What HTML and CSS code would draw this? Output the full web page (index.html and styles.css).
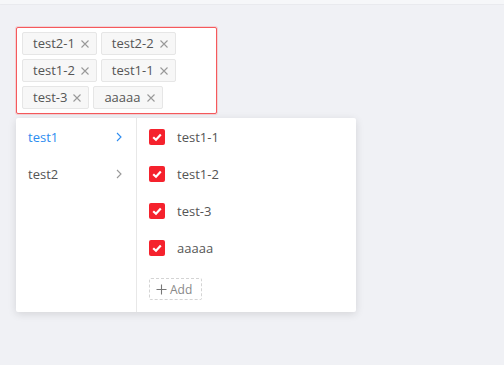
FILE: index.html
```html
<!DOCTYPE html>
<html>
<head>
<meta charset="utf-8">
<link rel="stylesheet" href="styles.css">
</head>
<body>
<div class="topbar"></div>
<div class="content">
  <div class="select">
    <span class="tag">test2-1<svg class="x" width="8" height="8" viewBox="0 0 8 8"><path d="M0.5 0.5 L7.5 7.5 M7.5 0.5 L0.5 7.5" stroke="currentColor" stroke-width="1.1"/></svg></span>
    <span class="tag">test2-2<svg class="x" width="8" height="8" viewBox="0 0 8 8"><path d="M0.5 0.5 L7.5 7.5 M7.5 0.5 L0.5 7.5" stroke="currentColor" stroke-width="1.1"/></svg></span>
    <span class="tag">test1-2<svg class="x" width="8" height="8" viewBox="0 0 8 8"><path d="M0.5 0.5 L7.5 7.5 M7.5 0.5 L0.5 7.5" stroke="currentColor" stroke-width="1.1"/></svg></span>
    <span class="tag">test1-1<svg class="x" width="8" height="8" viewBox="0 0 8 8"><path d="M0.5 0.5 L7.5 7.5 M7.5 0.5 L0.5 7.5" stroke="currentColor" stroke-width="1.1"/></svg></span>
    <span class="tag">test-3<svg class="x" width="8" height="8" viewBox="0 0 8 8"><path d="M0.5 0.5 L7.5 7.5 M7.5 0.5 L0.5 7.5" stroke="currentColor" stroke-width="1.1"/></svg></span>
    <span class="tag">aaaaa<svg class="x" width="8" height="8" viewBox="0 0 8 8"><path d="M0.5 0.5 L7.5 7.5 M7.5 0.5 L0.5 7.5" stroke="currentColor" stroke-width="1.1"/></svg></span>
  </div>
  <div class="dropdown">
    <div class="menu">
      <div class="item active">test1<svg class="chev" width="8" height="10" viewBox="0 0 8 10"><path d="M2 1 L6 5 L2 9" fill="none" stroke="currentColor" stroke-width="1.1"/></svg></div>
      <div class="item">test2<svg class="chev" width="8" height="10" viewBox="0 0 8 10"><path d="M2 1 L6 5 L2 9" fill="none" stroke="currentColor" stroke-width="1.1"/></svg></div>
    </div>
    <div class="options">
      <div class="opt"><span class="cb"><svg width="16" height="16" viewBox="0 0 16 16"><path d="M4.2 8.2 L7 10.8 L11.8 5.6" fill="none" stroke="#fff" stroke-width="2.2"/></svg></span>test1-1</div>
      <div class="opt"><span class="cb"><svg width="16" height="16" viewBox="0 0 16 16"><path d="M4.2 8.2 L7 10.8 L11.8 5.6" fill="none" stroke="#fff" stroke-width="2.2"/></svg></span>test1-2</div>
      <div class="opt"><span class="cb"><svg width="16" height="16" viewBox="0 0 16 16"><path d="M4.2 8.2 L7 10.8 L11.8 5.6" fill="none" stroke="#fff" stroke-width="2.2"/></svg></span>test-3</div>
      <div class="opt"><span class="cb"><svg width="16" height="16" viewBox="0 0 16 16"><path d="M4.2 8.2 L7 10.8 L11.8 5.6" fill="none" stroke="#fff" stroke-width="2.2"/></svg></span>aaaaa</div>
      <div class="add"><svg width="11" height="11" viewBox="0 0 11 11"><path d="M5.5 0.5 V10.5 M0.5 5.5 H10.5" stroke="#777" stroke-width="1.1"/></svg><span>Add</span></div>
    </div>
  </div>
</div>
</body>
</html>
```
FILE: styles.css
```css
html, body {
  margin: 0;
  padding: 0;
}
body {
  background: #f0f1f5;
  font-family: "Open Sans", "Noto Sans", sans-serif;
  font-size: 13px;
  color: #555;
  width: 504px;
  height: 365px;
  overflow: hidden;
}
.topbar {
  height: 4px;
  background: #f6f7f9;
  box-shadow: 0 1px 1px rgba(0,0,0,0.03);
}
.content {
  padding: 23px 0 0 16px;
}
.select {
  box-sizing: border-box;
  width: 201px;
  height: 87px;
  background: #fff;
  border: 1px solid #f5595c;
  border-radius: 2px;
  box-shadow: 0 0 0 1px rgba(245, 89, 92, 0.2);
  padding: 4px 5px;
  display: flex;
  flex-wrap: wrap;
  column-gap: 4px;
  row-gap: 4px;
  align-content: flex-start;
}
.tag {
  box-sizing: border-box;
  height: 23px;
  display: inline-flex;
  align-items: center;
  padding: 0 7px 0 10px;
  background: #f7f7f7;
  border: 1px solid #e6e6e6;
  border-radius: 2px;
  color: #555;
  line-height: 21px;
}
.x {
  color: #999;
  margin-left: 6px;
}
.dropdown {
  margin-top: 4px;
  width: 340px;
  height: 194px;
  background: #fff;
  border-radius: 2px;
  box-shadow: 0 2px 8px rgba(0,0,0,0.12);
  display: flex;
}
.menu {
  width: 120px;
  border-right: 1px solid #e8e8e8;
}
.item {
  height: 37px;
  display: flex;
  align-items: center;
  justify-content: space-between;
  padding: 0 13px 0 12px;
  color: #555;
}
.item .chev {
  color: #999;
}
.item.active {
  color: #2d8cf0;
}
.item.active .chev {
  color: #2d8cf0;
}
.options {
  flex: 1;
  padding: 0 12px;
}
.opt {
  height: 37px;
  display: flex;
  align-items: center;
  color: #555;
}
.cb {
  width: 16px;
  height: 16px;
  background: #f5222d;
  border-radius: 2px;
  margin-right: 12px;
  display: inline-flex;
}
.add {
  margin-top: 12px;
  box-sizing: border-box;
  width: 53px;
  height: 22px;
  border: 1px dashed #d4d4d4;
  border-radius: 2px;
  display: flex;
  align-items: center;
  padding-left: 6px;
  color: #888;
  font-size: 12px;
}
.add svg {
  margin-right: 3px;
}
```
